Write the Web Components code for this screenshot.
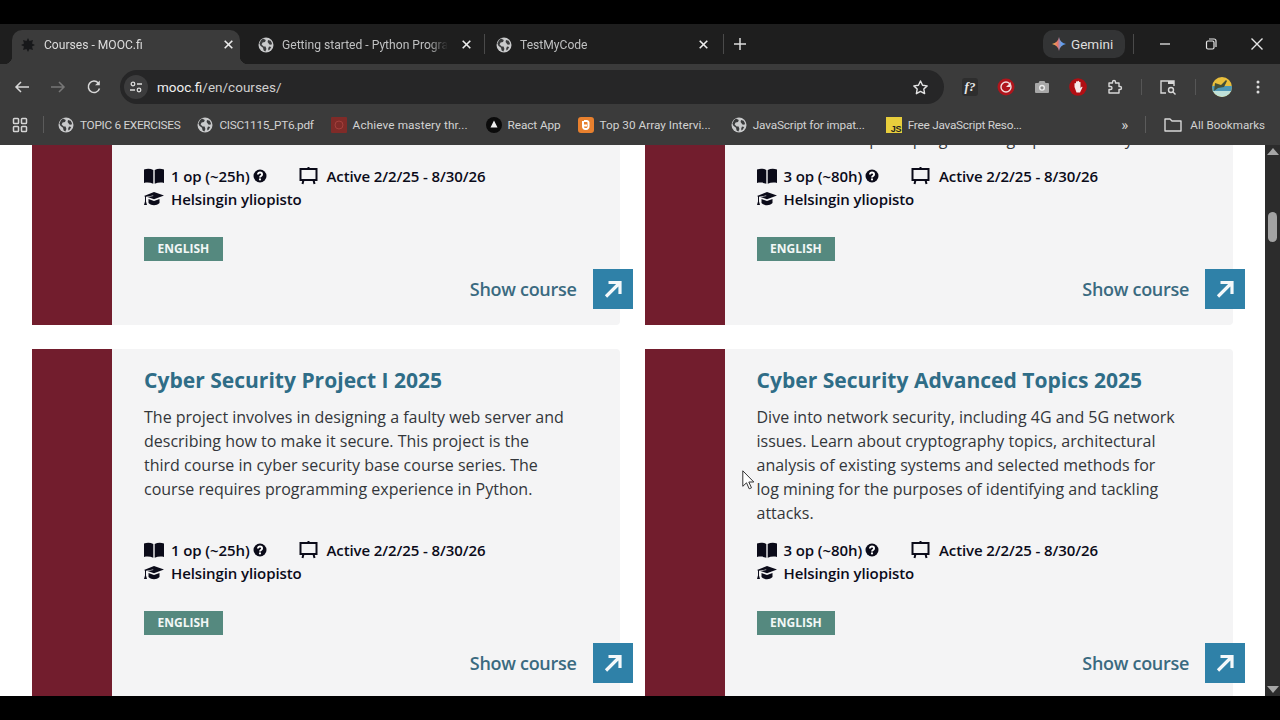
<!DOCTYPE html>
<html>
<head>
<meta charset="utf-8">
<title>Courses - MOOC.fi</title>
<style>
  html, body { margin: 0; height: 100%; background: #000; overflow: hidden; }
</style>
</head>
<body>
<template id="globe-tpl">
  <style>
    :host { display: inline-flex; flex: none; }
    svg { width: 16px; height: 16px; display: block; }
  </style>
  <svg viewBox="0 0 16 16"><circle cx="8" cy="8" r="7.5" fill="#c9cacb"/><path fill="#3a3b3c" d="M5 1.6 7.8 3 7 5 4.6 5.4 3.6 7.4 5.6 9.6 7.6 9.6 8.4 12 7.4 14.4 5.6 13.6 5 10.8 2.4 8.8 1.4 6.600 3 3.200ZM10 3l2.600.8 1.400 2.400-.6 1.600-2-.4L9.600 5ZM11 9.600l2.200.4-1.400 2.600-1.400 1-.2-2Z"/></svg>
</template>

<template id="tab-tpl">
  <style>
    :host { display: flex; align-items: center; height: 34px; padding-bottom: 5px; box-sizing: border-box; font: 12.1px Roboto, sans-serif; color: #bfc0c1; position: relative; flex: none; }
    :host([active]) { background: #3b3b3b; color: #dcdcdc; border-radius: 10px 10px 0 0; }
    :host([active])::before, :host([active])::after { content: ""; position: absolute; bottom: 0; width: 8px; height: 8px; }
    :host([active])::before { left: -8px; background: radial-gradient(circle at 0 0, transparent 8px, #3b3b3b 8.5px); }
    :host([active])::after { right: -8px; background: radial-gradient(circle at 100% 0, transparent 8px, #3b3b3b 8.5px); }
    .label { flex: 1; min-width: 0; margin-left: 8px; white-space: nowrap; overflow: hidden; -webkit-mask-image: linear-gradient(90deg, #000 88%, transparent); mask-image: linear-gradient(90deg, #000 88%, transparent); }
    svg { flex: none; margin-left: 14px; display: block; }
  </style>
  <slot name="icon"></slot>
  <span class="label"><slot></slot></span>
  <svg width="9" height="9" viewBox="0 0 9 9"><path stroke="#ececec" stroke-width="1.600" d="M.7.7l7.600 7.600M8.300.7.700 8.300"/></svg>
</template>

<template id="mark-tpl">
  <style>
    :host { display: inline-flex; align-items: center; gap: 6px; font: 11.8px Roboto, sans-serif; color: #d2d2d2; white-space: nowrap; flex: none; }
  </style>
  <slot name="icon"></slot><slot></slot>
</template>

<template id="chrome-tpl">
  <style>
    :host { display: block; flex: none; }
    .strip { height: 40px; background: #1e1e1e; display: flex; align-items: flex-end; padding-left: 12px; }
    .sep { width: 1px; height: 20px; background: #4a4a4a; align-self: center; flex: none; }
    .spacer { flex: 1; }
    .gemini { align-self: center; display: flex; align-items: center; gap: 4px; height: 28px; width: 82px; box-sizing: border-box; padding-left: 8px; border-radius: 10px; background: #333435; color: #dedede; font: 13.500px Roboto, sans-serif; flex: none; }
    .win { align-self: center; display: flex; align-items: center; height: 40px; flex: none; }
    .win svg { display: block; }
    .tools { height: 46px; background: #3b3b3b; display: flex; align-items: center; padding: 0 14px; }
    .tools .ic { display: block; flex: none; }
    .omni { width: 824px; height: 34px; margin-left: 18px; border-radius: 17px; background: #262627; display: flex; align-items: center; box-sizing: border-box; padding: 0 15px 0 4px; font: 13.500px Roboto, sans-serif; flex: none; }
    .tune { width: 24px; height: 24px; border-radius: 50%; background: #3c3c3d; display: flex; align-items: center; justify-content: center; flex: none; margin-right: 9px; }
    .omni .url { flex: 1; }
    .omni b { font-weight: 400; color: #f0f0f0; }
    .omni i { font-style: normal; color: #cfcfcf; }
    .exts { display: flex; align-items: center; margin-left: 18px; }
    .exts .sep { background: #565656; height: 16px; }
    .fq { width: 16px; height: 18px; background: #2e2e2e; border-radius: 3px; color: #e8e8e8; font: italic 700 13px/18px "Liberation Serif", serif; text-align: center; flex: none; }
    .marks { height: 35px; background: #3b3b3b; display: flex; align-items: center; padding: 0 0 6px 12px; box-sizing: border-box; }
    .marks .sep { background: #5b5b5b; height: 17px; }
    .marks .right { margin-left: auto; display: flex; align-items: center; }
    .all { font: 11.600px Roboto, sans-serif; color: #d2d2d2; margin-right: 15px; }
  </style>
  <div class="strip">
    <slot name="tabs"></slot>
    <span class="spacer"></span>
    <div class="gemini">
      <svg width="16" height="16" viewBox="0 0 16 16"><defs><linearGradient id="gem" x1="0" y1="0.5" x2="1" y2="0.5"><stop offset="0" stop-color="#efc24a"/><stop offset=".4" stop-color="#e8746a"/><stop offset=".65" stop-color="#6aa0ea"/><stop offset="1" stop-color="#4f8fe8"/></linearGradient></defs><path fill="url(#gem)" d="M8 1c.6 3.700 2.800 6.200 7 7-4.200.8-6.400 3.300-7 7-.6-3.700-2.800-6.200-7-7 4.200-.8 6.400-3.300 7-7Z"/></svg>
      Gemini
    </div>
    <div class="win">
      <span class="sep" style="margin:0 25px 0 8px"></span>
      <svg width="12" height="12" viewBox="0 0 12 12"><path stroke="#e6e6e6" stroke-width="1.300" d="M1 6h10"/></svg>
      <svg style="margin-left:34px" width="12" height="12" viewBox="0 0 12 12" fill="none" stroke="#e6e6e6" stroke-width="1.200"><rect x="1.500" y="3" width="7.500" height="8" rx="1.500"/><path d="M4 1h5a2 2 0 0 1 2 2v6"/></svg>
      <svg style="margin-left:34px;margin-right:17px" width="12" height="12" viewBox="0 0 12 12"><path stroke="#e6e6e6" stroke-width="1.400" d="M.5.5l11 11M11.500.5l-11 11"/></svg>
    </div>
  </div>
  <div class="tools">
    <svg class="ic" width="16" height="16" viewBox="0 0 16 16" fill="none" stroke="#d8d8d8" stroke-width="1.500"><path d="M15 8H2M7 3 2 8l5 5"/></svg>
    <svg class="ic" style="margin-left:20px" width="16" height="16" viewBox="0 0 16 16" fill="none" stroke="#777" stroke-width="1.500"><path d="M1 8h13M9 3l5 5-5 5"/></svg>
    <svg class="ic" style="margin-left:20px" width="16" height="16" viewBox="0 0 16 16" fill="none" stroke="#d8d8d8" stroke-width="1.500"><path d="M13.500 9.500A5.700 5.700 0 1 1 12.300 4"/><path fill="#d8d8d8" stroke="none" d="M13.800 1.500v4.700H9.100Z"/></svg>
    <div class="omni">
      <span class="tune"><svg width="16" height="16" viewBox="0 0 16 16" fill="none" stroke="#dcdcdc" stroke-width="1.300"><circle cx="5" cy="5" r="1.800"/><path d="M9 5h5M2 11h5"/><circle cx="11" cy="11" r="1.800"/></svg></span>
      <span class="url"><b>mooc.fi</b><i>/en/courses/</i></span>
      <svg width="17" height="17" viewBox="0 0 24 24" fill="none" stroke="#e4e4e4" stroke-width="2"><path stroke-linejoin="round" d="M12 2.800l2.900 6 6.500.9-4.700 4.500 1.100 6.500-5.800-3.100-5.800 3.100 1.100-6.500L2.600 9.700l6.500-.9Z"/></svg>
    </div>
    <div class="exts">
      <span class="fq">f?</span>
      <svg class="ic" style="margin-left:19px" width="18" height="18" viewBox="0 0 18 18"><circle cx="9" cy="9" r="8.500" fill="#b0151c"/><circle cx="9" cy="9" r="5" fill="none" stroke="#f2dede" stroke-width="1.400"/><path fill="#f2dede" d="M9 9l5-5-1 5Z"/></svg>
      <svg class="ic" style="margin-left:19px" width="16" height="16" viewBox="0 0 16 16"><path fill="#a7a7a7" d="M5.500 2h5l1 2H14a1 1 0 0 1 1 1v8a1 1 0 0 1-1 1H2a1 1 0 0 1-1-1V5a1 1 0 0 1 1-1h2.500Z"/><circle cx="8" cy="8.800" r="3" fill="#ececec"/><circle cx="8" cy="8.800" r="1.600" fill="#8a8a8a"/></svg>
      <svg class="ic" style="margin-left:19px" width="18" height="18" viewBox="0 0 18 18"><circle cx="9" cy="9" r="8.800" fill="#b10f14"/><path fill="#f6eaea" d="M5.500 9V5.500a.8.800 0 0 1 1.500 0V3.800a.8.800 0 0 1 1.500 0V3.300a.8.800 0 0 1 1.500 0v.9a.8.800 0 0 1 1.500 0V10l.9-1c.8-.5 1.300.2.900.8L11 14.500H7.500Z"/></svg>
      <svg class="ic" style="margin-left:20px" width="16" height="16" viewBox="0 0 16 16" fill="none" stroke="#d8d8d8" stroke-width="1.400"><path stroke-linejoin="round" d="M2 4h3.500V3a1.500 1.500 0 0 1 3 0v1H12v3.500h1a1.500 1.500 0 0 1 0 3h-1V14H2v-3.500h1.500a1.500 1.500 0 0 0 0-3H2Z"/></svg>
      <span class="sep" style="margin-left:18px"></span>
      <svg class="ic" style="margin-left:17px" width="18" height="16" viewBox="0 0 18 16" fill="none" stroke="#d8d8d8" stroke-width="1.400"><path d="M7 14H2V2h13v5"/><path fill="#d8d8d8" stroke="none" d="M9 2h6v3H9Z"/><circle cx="12" cy="11" r="2.500"/><path d="M14 13l2.500 2.500"/></svg>
      <span class="sep" style="margin-left:18px"></span>
      <svg class="ic" style="margin-left:16px" width="20" height="20" viewBox="0 0 20 20"><clipPath id="av"><circle cx="10" cy="10" r="10"/></clipPath><g clip-path="url(#av)"><rect width="20" height="20" fill="#e9bf3c"/><rect y="9" width="20" height="6" fill="#4e97b6"/><rect y="14" width="20" height="6" fill="#bfe0d8"/><path fill="#43503a" d="M3 6l6 2 5-5 1 1-3 6-6 1-4 3Z"/></g></svg>
      <svg class="ic" style="margin-left:24px" width="4" height="16" viewBox="0 0 4 16" fill="#dcdcdc"><circle cx="2" cy="3" r="1.500"/><circle cx="2" cy="8" r="1.500"/><circle cx="2" cy="13" r="1.500"/></svg>
    </div>
  </div>
  <div class="marks">
    <svg width="16" height="16" viewBox="0 0 16 16" fill="none" stroke="#d4d4d4" stroke-width="1.500"><rect x="1.500" y="1.500" width="5" height="5" rx=".8"/><rect x="9.500" y="1.500" width="5" height="5" rx=".8"/><rect x="1.500" y="9.500" width="5" height="5" rx=".8"/><rect x="9.500" y="9.500" width="5" height="5" rx=".8"/></svg>
    <span class="sep" style="margin:0 14px 0 15px"></span>
    <slot name="marks"></slot>
    <div class="right">
      <span style="color:#d4d4d4;font:15px Roboto,sans-serif;margin-right:17px">»</span>
      <span class="sep" style="margin-right:18px"></span>
      <svg width="18" height="15" viewBox="0 0 18 15" fill="none" stroke="#d8d8d8" stroke-width="1.400" style="margin-right:8px"><path stroke-linejoin="round" d="M1 2h5l2 2h9v10H1Z"/></svg>
      <span class="all">All Bookmarks</span>
    </div>
  </div>
</template>

<template id="card-tpl">
  <style>
    :host { display: grid; grid-template-columns: 80px 1fr; height: 350px; position: relative; font-family: "Open Sans", sans-serif; color: #0b0b19; }
    .band { background: #721d2d; }
    .panel { background: #f4f4f5; padding: 15px 32px 0; position: relative; min-width: 0; border-radius: 0 4px 4px 0; }
    h2 { margin: 0 0 9px; font: 700 21.050px/32px "Open Sans", sans-serif; color: #2f6d87; }
    .desc { height: 133px; width: 422px; font-size: 16px; line-height: 24px; color: #33363a; }
    .meta { font-weight: 600; font-size: 15px; line-height: 24px; letter-spacing: -0.1px; }
    .row { display: flex; align-items: center; height: 23.500px; }
    .row svg { flex: none; display: block; }
    .ic { width: 20px; margin-right: 7px; }
    .help { margin-left: 3px; }
    .slide { margin-left: 32px; margin-right: 9px; }
    .tag { display: inline-block; margin-top: 26px; background: #55897f; color: #f2f7f6; font-size: 12px; font-weight: 700; line-height: 24px; height: 24px; padding: 0 13.500px; vertical-align: top; }
    .go { position: absolute; right: -12.500px; bottom: 16px; display: flex; align-items: center; gap: 16px; color: #3a6a80; font-size: 18px; font-weight: 600; letter-spacing: -0.3px; text-decoration: none; }
    .arrow { width: 40px; height: 40px; background: #2f81a8; display: flex; align-items: center; justify-content: center; }
  </style>
  <div class="band"></div>
  <div class="panel">
    <h2><slot name="title"></slot></h2>
    <div class="desc"><slot name="desc"></slot></div>
    <div class="meta">
      <div class="row">
        <svg class="ic" height="16" viewBox="0 0 20 16" fill="#0b0b19"><path d="M0 1.500C3 .5 6.500.5 9.300 2v13.800C6.500 14.500 3 14.300 0 15ZM20 1.500C17 .5 13.500.5 10.700 2v13.800c2.800-1.300 6.300-1.500 9.300-.8Z"/></svg>
        <span><slot name="credits"></slot></span>
        <svg class="help" width="14" height="14" viewBox="0 0 14 14"><circle cx="7" cy="7" r="6.500" fill="#0b0b19"/><path fill="none" stroke="#fff" stroke-width="1.800" d="M4.900 5.500c0-1.300 1-2 2.100-2s2.100.7 2.100 1.900c0 1.500-2.100 1.500-2.100 3"/><circle cx="7" cy="10.400" r="1.100" fill="#fff"/></svg>
        <svg class="slide" width="19" height="19" viewBox="0 0 19 19" fill="none" stroke="#0b0b19" stroke-width="2"><path d="M1.500 3h16v11h-16ZM9.500 1v2M4.500 14l-1 4M14.500 14l1 4"/></svg>
        <span><slot name="dates"></slot></span>
      </div>
      <div class="row">
        <svg class="ic" height="14" viewBox="0 0 20 14" fill="#0b0b19"><path d="M10 0l10 3.500-10 3.800L3.500 5 9.500 4 9 3.400 2 4.800v4.700L3 13H0l1-3.500V4.400L0 4Z"/><path d="M4.500 7l5.500 2 5.500-2v4c-3 3-8 3-11 0Z"/></svg>
        <span><slot name="org"></slot></span>
      </div>
    </div>
    <span class="tag"><slot name="tag"></slot></span>
    <a class="go"><slot name="link"></slot><span class="arrow"><svg width="20" height="20" viewBox="0 0 20 20" fill="none" stroke="#f4f8fa" stroke-width="3.200"><path d="M3 17.500 16 4.500M5.500 3.500h11.500v11.500"/></svg></span></a>
  </div>
</template>

<template id="page-tpl">
  <style>
    :host { display: block; flex: 1; min-height: 0; background: #fff; position: relative; overflow: hidden; }
    .list { display: grid; grid-template-columns: 588px 588px; column-gap: 24.500px; row-gap: 24px; padding-left: 32px; margin-top: -170px; }
    .bar { position: absolute; top: 0; right: 0; bottom: 0; width: 15px; background: #2c2c2c; }
    .up, .down { position: absolute; left: 2px; width: 0; height: 0; border: 6px solid transparent; }
    .up { top: 3px; border-top: 0; border-bottom: 7px solid #a6a6a6; }
    .down { bottom: 3px; border-bottom: 0; border-top: 7px solid #a6a6a6; }
    .thumb { position: absolute; left: 3px; top: 67px; width: 9px; height: 30px; border-radius: 5px; background: #a3a3a3; }
    .cursor { position: absolute; left: 742px; top: 325px; }
  </style>
  <div class="list"><slot></slot></div>
  <div class="bar"><span class="up"></span><span class="thumb"></span><span class="down"></span></div>
  <svg class="cursor" width="13" height="20" viewBox="0 0 13 20"><path fill="#fff" stroke="#333" stroke-width="1" d="M.8.8v15.500l3.700-3.500 2.700 6 2.300-1-2.700-5.800h5Z"/></svg>
</template>

<template id="app-tpl">
  <style>
    :host { display: flex; flex-direction: column; height: 720px; background: #000; }
    .top { height: 24px; flex: none; }
    .bottom { height: 24px; flex: none; }
  </style>
  <div class="top"></div>
  <slot name="chrome"></slot>
  <slot name="page"></slot>
  <div class="bottom"></div>
</template>

<browser-app>
  <browser-chrome slot="chrome">
    <browser-tab slot="tabs" active style="width:228px;padding-left:8px;padding-right:7px">
      <svg slot="icon" width="16" height="16" viewBox="0 0 16 16"><path fill="#17181a" d="M8 1l1.500 3 3.500-1-1 3.500 3 1.500-3 1.500 1 3.500-3.500-1L8 15l-1.500-3-3.500 1 1-3.500L1 8l3-1.500L3 3l3.500 1Z"/></svg>
      Courses - MOOC.fi
    </browser-tab>
    <browser-tab slot="tabs" style="width:244px;padding-left:18px;padding-right:13px">
      <moz-globe slot="icon"></moz-globe>
      Getting started - Python Programming
    </browser-tab>
    <span slot="tabs" style="width:1px;height:20px;background:#4a4a4a;align-self:center;flex:none"></span>
    <browser-tab slot="tabs" style="width:238px;padding-left:11px;padding-right:15px">
      <moz-globe slot="icon"></moz-globe>
      TestMyCode
    </browser-tab>
    <span slot="tabs" style="width:1px;height:20px;background:#4a4a4a;align-self:center;flex:none"></span>
    <svg slot="tabs" width="12" height="12" viewBox="0 0 12 12" style="align-self:center;margin-left:10px;flex:none"><path stroke="#dcdcdc" stroke-width="1.500" d="M6 0v12M0 6h12"/></svg>

    <book-mark slot="marks" style="letter-spacing:-.3px"><moz-globe slot="icon"></moz-globe>TOPIC 6 EXERCISES</book-mark>
    <book-mark slot="marks" style="margin-left:17px;letter-spacing:-.3px"><moz-globe slot="icon"></moz-globe>CISC1115_PT6.pdf</book-mark>
    <book-mark slot="marks" style="margin-left:17px;letter-spacing:.1px"><svg slot="icon" width="16" height="16" viewBox="0 0 16 16"><rect width="16" height="16" rx="1" fill="#7f2b28"/><circle cx="8" cy="8" r="4" fill="none" stroke="#a3403c"/></svg>Achieve mastery thr...</book-mark>
    <book-mark slot="marks" style="margin-left:18px;letter-spacing:-.1px"><svg slot="icon" width="16" height="16" viewBox="0 0 16 16"><circle cx="8" cy="8" r="8" fill="#0b0b0b"/><path fill="#eee" d="M8 3.500l3.500 7h-7Z"/></svg>React App</book-mark>
    <book-mark slot="marks" style="margin-left:17px"><svg slot="icon" width="16" height="16" viewBox="0 0 16 16"><rect width="16" height="16" rx="3" fill="#e8802e"/><path fill="none" stroke="#fff" stroke-width="2" d="M6 4h2.500a2 2 0 0 1 2 2.500V9a2.500 2.500 0 0 1-2.500 3H7.500A2.500 2.500 0 0 1 5 9V4M6 8.500h3"/></svg>Top 30 Array Intervi...</book-mark>
    <book-mark slot="marks" style="margin-left:20px;letter-spacing:-.15px"><moz-globe slot="icon"></moz-globe>JavaScript for impat...</book-mark>
    <book-mark slot="marks" style="margin-left:21px;letter-spacing:-.25px"><span slot="icon" style="display:block;width:16px;height:16px;background:#e8ce3c;color:#222;font:700 9px/10px 'Liberation Sans',sans-serif;padding:7px 0 0 5px;box-sizing:border-box">JS</span>Free JavaScript Reso...</book-mark>
  </browser-chrome>

  <course-page slot="page">
    <course-card>
      <span slot="title">Cyber Security Base</span>
      <span slot="desc">Learn the basic concepts of cyber security and get a hands-on understanding of common web vulnerabilities.</span>
      <span slot="credits">1 op (~25h)</span>
      <span slot="dates">Active 2/2/25 - 8/30/26</span>
      <span slot="org">Helsingin yliopisto</span>
      <span slot="tag">ENGLISH</span>
      <span slot="link">Show course</span>
    </course-card>
    <course-card>
      <span slot="title">Cyber Security Topics</span>
      <span slot="desc">Explore how software and networks can be<br>secured through programming and by design,<br>with practical exercises on the topic of<br>cryptography and secure systems, covering<br>the most basic piece programming a platform only</span>
      <span slot="credits">3 op (~80h)</span>
      <span slot="dates">Active 2/2/25 - 8/30/26</span>
      <span slot="org">Helsingin yliopisto</span>
      <span slot="tag">ENGLISH</span>
      <span slot="link">Show course</span>
    </course-card>
    <course-card>
      <span slot="title">Cyber Security Project I 2025</span>
      <span slot="desc">The project involves in designing a faulty web server and describing how to make it secure. This project is the third course in cyber security base course series. The course requires programming experience in Python.</span>
      <span slot="credits">1 op (~25h)</span>
      <span slot="dates">Active 2/2/25 - 8/30/26</span>
      <span slot="org">Helsingin yliopisto</span>
      <span slot="tag">ENGLISH</span>
      <span slot="link">Show course</span>
    </course-card>
    <course-card>
      <span slot="title">Cyber Security Advanced Topics 2025</span>
      <span slot="desc">Dive into network security, including 4G and 5G network issues. Learn about cryptography topics, architectural analysis of existing systems and selected methods for log mining for the purposes of identifying and tackling attacks.</span>
      <span slot="credits">3 op (~80h)</span>
      <span slot="dates">Active 2/2/25 - 8/30/26</span>
      <span slot="org">Helsingin yliopisto</span>
      <span slot="tag">ENGLISH</span>
      <span slot="link">Show course</span>
    </course-card>
  </course-page>
</browser-app>

<script>
  (function () {
    function register(name, tplId) {
      const template = document.getElementById(tplId).content;
      customElements.define(name, class extends HTMLElement {
        constructor() {
          super();
          this.attachShadow({ mode: 'open' }).appendChild(document.importNode(template, true));
        }
      });
    }

    register('moz-globe', 'globe-tpl');
    register('browser-tab', 'tab-tpl');
    register('book-mark', 'mark-tpl');
    register('browser-chrome', 'chrome-tpl');
    register('course-card', 'card-tpl');
    register('course-page', 'page-tpl');
    register('browser-app', 'app-tpl');
  })();
</script>
</body>
</html>
